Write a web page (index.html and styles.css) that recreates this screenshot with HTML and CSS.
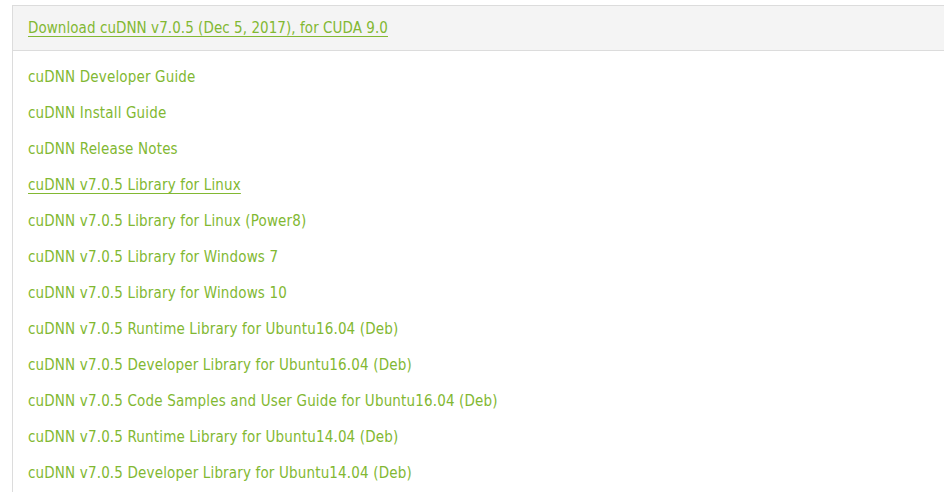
FILE: index.html
```html
<!DOCTYPE html>
<html>
<head>
<meta charset="utf-8">
<link rel="stylesheet" href="styles.css">
</head>
<body>
<div class="panel">
  <div class="panel-heading">
    <a class="heading-link" href="#">Download cuDNN v7.0.5 (Dec 5, 2017), for CUDA 9.0</a>
  </div>
  <ul class="panel-body">
    <li><a href="#">cuDNN Developer Guide</a></li>
    <li><a href="#">cuDNN Install Guide</a></li>
    <li><a href="#">cuDNN Release Notes</a></li>
    <li><a class="underlined" href="#">cuDNN v7.0.5 Library for Linux</a></li>
    <li><a href="#">cuDNN v7.0.5 Library for Linux (Power8)</a></li>
    <li><a href="#">cuDNN v7.0.5 Library for Windows 7</a></li>
    <li><a href="#">cuDNN v7.0.5 Library for Windows 10</a></li>
    <li><a href="#">cuDNN v7.0.5 Runtime Library for Ubuntu16.04 (Deb)</a></li>
    <li><a href="#">cuDNN v7.0.5 Developer Library for Ubuntu16.04 (Deb)</a></li>
    <li><a href="#">cuDNN v7.0.5 Code Samples and User Guide for Ubuntu16.04 (Deb)</a></li>
    <li><a href="#">cuDNN v7.0.5 Runtime Library for Ubuntu14.04 (Deb)</a></li>
    <li><a href="#">cuDNN v7.0.5 Developer Library for Ubuntu14.04 (Deb)</a></li>
  </ul>
</div>
</body>
</html>
```
FILE: styles.css
```css
html, body {
  margin: 0;
  padding: 0;
  background: #ffffff;
  overflow: hidden;
}
body {
  font-family: "DejaVu Sans Condensed", "Noto Sans", sans-serif;
  font-size: 15px;
  color: #82b832;
}
.panel {
  margin-top: 5px;
  margin-left: 12px;
  border-left: 1px solid #dcdcdc;
  border-top: 1px solid #dcdcdc;
  height: calc(100vh - 6px);
  overflow: hidden;
}
.panel-heading {
  background: #f4f4f4;
  height: 44px;
  border-bottom: 1px solid #dcdcdc;
  display: flex;
  align-items: center;
  padding-left: 15px;
  letter-spacing: 0.06px;
}
a {
  color: #82b832;
  text-decoration: none;
}
.heading-link, .underlined {
  text-decoration: underline;
  text-underline-offset: 3px;
}
.panel-body {
  list-style: none;
  margin: 0;
  padding: 15px 0 0 15px;
  letter-spacing: 0.16px;
}
.panel-body li {
  height: 36px;
  line-height: 22px;
}
```
